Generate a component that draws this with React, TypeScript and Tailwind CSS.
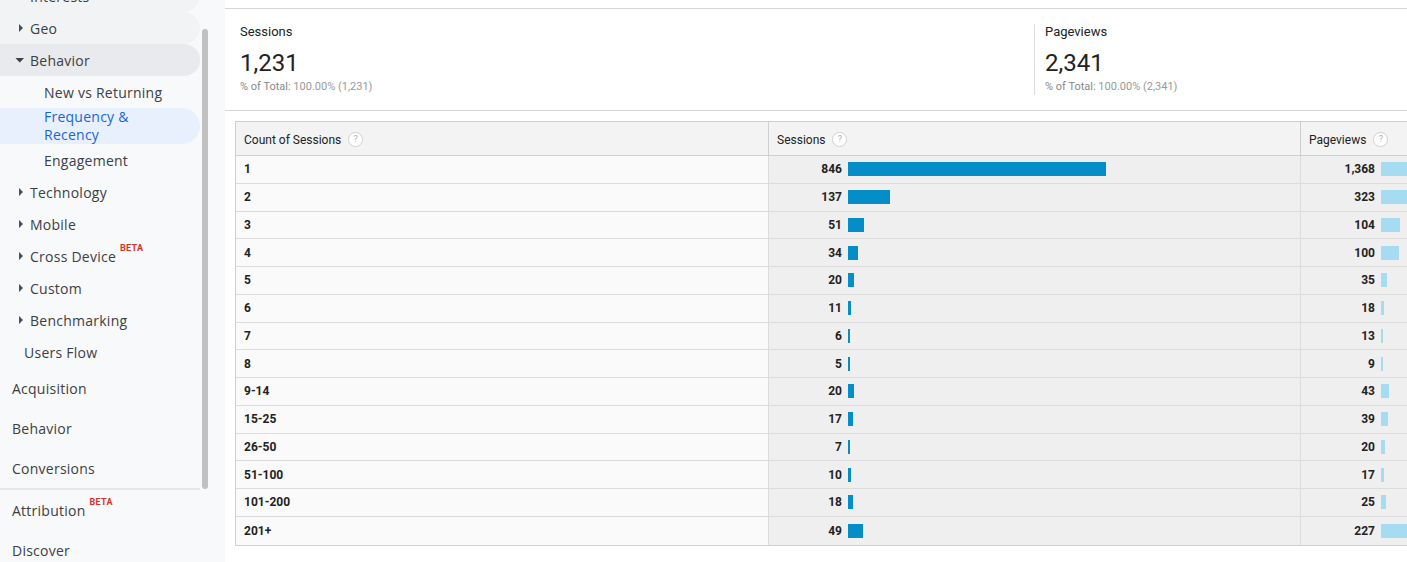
import React from 'react';

const rows: [string, number, number][] = [
  ['1', 846, 1368],
  ['2', 137, 323],
  ['3', 51, 104],
  ['4', 34, 100],
  ['5', 20, 35],
  ['6', 11, 18],
  ['7', 6, 13],
  ['8', 5, 9],
  ['9-14', 20, 43],
  ['15-25', 17, 39],
  ['26-50', 7, 20],
  ['51-100', 10, 17],
  ['101-200', 18, 25],
  ['201+', 49, 227],
];

const fmt = (n: number) => n.toLocaleString('en-US');

function Caret({ open }: { open?: boolean }) {
  return (
    <svg width="10" height="10" viewBox="0 0 10 10" className="shrink-0">
      {open ? <path d="M0.5 3h8.5L4.75 7.5z" fill="#3c4043" /> : <path d="M3 1v8l4-4z" fill="#4a4e52" />}
    </svg>
  );
}

function Beta() {
  return (
    <sup
      className="ml-[4px] -top-[8px] text-[9px] font-bold text-[#d93025] tracking-[0.3px]"
      style={{ fontFamily: 'Roboto, sans-serif' }}
    >
      BETA
    </sup>
  );
}

function NavItem({
  label,
  caret,
  open,
  bg,
  beta,
}: {
  label: string;
  caret?: boolean;
  open?: boolean;
  bg?: string;
  beta?: boolean;
}) {
  return (
    <div className={`h-[32px] w-[200px] rounded-r-full flex items-center ${open ? 'pl-[15px]' : 'pl-[16px]'} ${bg ?? ''}`}>
      {caret && (
        <span className={`${open ? 'w-[15px]' : 'w-[14px]'} flex items-center`}>
          <Caret open={open} />
        </span>
      )}
      <span>{label}</span>
      {beta && <Beta />}
    </div>
  );
}

function Help() {
  return (
    <span className="ml-[7px] inline-flex h-[15px] w-[15px] items-center justify-center rounded-full border border-[#d0d0d0] bg-white text-[9px] text-[#b0b0b0]">
      ?
    </span>
  );
}

export default function App() {
  return (
    <div className="h-[562px] w-[1407px] overflow-hidden flex bg-white" style={{ fontFamily: 'Roboto, "Liberation Sans", sans-serif' }}>
      {/* sidebar */}
      <aside
        className="w-[225px] shrink-0 bg-[#f8f9fa] relative flex flex-col text-[14px] tracking-[0.25px] text-[#3c4043]"
        style={{ fontFamily: '"Open Sans", Roboto, sans-serif' }}
      >
        <div className="flex flex-col -mt-[20px]">
          <NavItem label="Interests" caret bg="bg-[#f1f3f4]" />
          <NavItem label="Geo" caret bg="bg-[#f1f3f4]" />
          <NavItem label="Behavior" caret open bg="bg-[#e8eaed]" />
          <div className="h-[32px] w-[200px] flex items-center pl-[44px]">New vs Returning</div>
          <div className="h-[36px] w-[200px] rounded-r-full bg-[#e8f0fe] flex flex-col justify-center pl-[44px] leading-[18px] text-[#1967d2]">
            <span>Frequency &amp;</span>
            <span>Recency</span>
          </div>
          <div className="h-[32px] w-[200px] flex items-center pl-[44px]">Engagement</div>
          <NavItem label="Technology" caret />
          <NavItem label="Mobile" caret />
          <NavItem label="Cross Device" caret beta />
          <NavItem label="Custom" caret />
          <NavItem label="Benchmarking" caret />
          <div className="h-[32px] flex items-center pl-[24px]">Users Flow</div>
          <div className="h-[40px] flex items-center pl-[12px]">Acquisition</div>
          <div className="h-[40px] flex items-center pl-[12px]">Behavior</div>
          <div className="h-[40px] flex items-center pl-[12px]">Conversions</div>
          <div className="h-[2px] w-[200px] bg-[#e6e7e9]" />
          <div className="h-[40px] flex items-center pl-[12px]">
            Attribution
            <Beta />
          </div>
          <div className="h-[40px] flex items-center pl-[12px]">Discover</div>
        </div>
        {/* scrollbar */}
        <div className="absolute left-[202px] top-[29px] h-[460px] w-[6px] rounded-full bg-[#c1c1c1]" />
      </aside>

      {/* main */}
      <main className="flex-1 min-w-0 pt-[8px]">
        <div className="border-t border-b border-[#d6d6d6] h-[103px] flex items-start pt-[13px]">
          <div className="w-[809px] pl-[15px]">
            <div className="text-[13px] text-[#222]">Sessions</div>
            <div className="text-[24px] leading-[30px] mt-[6px] text-[#222]">1,231</div>
            <div className="text-[11px] text-[#888] mt-[1px]">
              % of Total: <span className="text-[#999]">100.00% (1,231)</span>
            </div>
          </div>
          <div className="border-l border-[#ddd] pl-[10px] h-[71px] mt-[2px]">
            <div className="text-[13px] text-[#222] -mt-[2px]">Pageviews</div>
            <div className="text-[24px] leading-[30px] mt-[6px] text-[#222]">2,341</div>
            <div className="text-[11px] text-[#888] mt-[1px]">
              % of Total: <span className="text-[#999]">100.00% (2,341)</span>
            </div>
          </div>
        </div>

        <div className="ml-[10px] mt-[10px] w-[1597px] border border-[#cfcfcf]">
          <div className="flex h-[34px] bg-[#f3f3f3] border-b border-[#cfcfcf] text-[12px] text-[#222]">
            <div className="w-[533px] flex items-center pl-[8px] pt-[2px] border-r border-[#cfcfcf]">
              Count of Sessions
              <Help />
            </div>
            <div className="w-[532px] flex items-center pl-[8px] pt-[2px] border-r border-[#cfcfcf]">
              Sessions
              <Help />
            </div>
            <div className="flex-1 flex items-center pl-[8px] pt-[2px]">
              Pageviews
              <Help />
            </div>
          </div>
          {rows.map(([label, s, p], i) => (
            <div
              key={label}
              className={`flex h-[27.75px] text-[12px] font-bold text-[#222] ${i < rows.length - 1 ? 'border-b border-[#dcdcdc]' : ''}`}
            >
              <div className="w-[533px] bg-[#fafafa] flex items-center pl-[8px] border-r border-[#dcdcdc]">{label}</div>
              <div className="w-[532px] bg-[#efefef] flex items-center border-r border-[#dcdcdc]">
                <span className="w-[73px] text-right">{fmt(s)}</span>
                <span className="ml-[6px] h-[14px] bg-[#058dc7]" style={{ width: Math.max(2, Math.round(s * 0.305)) }} />
              </div>
              <div className="flex-1 bg-[#efefef] flex items-center">
                <span className="w-[74px] text-right">{fmt(p)}</span>
                <span className="ml-[6px] h-[14px] bg-[#a6dcf2]" style={{ width: Math.max(1, Math.round(p * 0.183)) }} />
              </div>
            </div>
          ))}
        </div>
      </main>
    </div>
  );
}
